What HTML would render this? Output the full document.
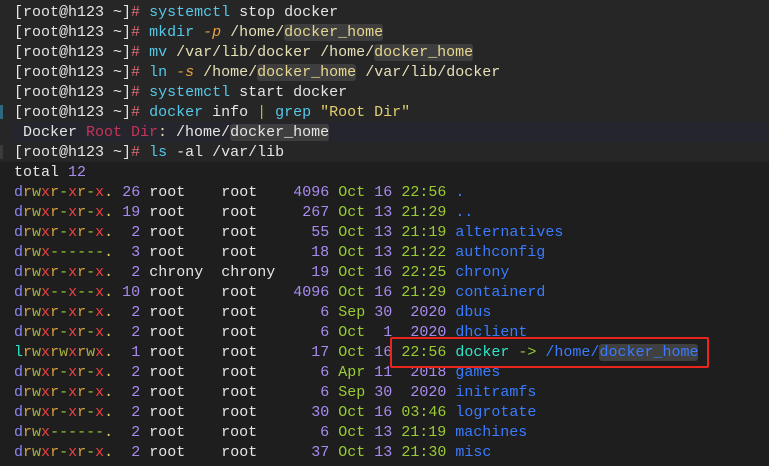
<!DOCTYPE html>
<html><head><style>
body{margin:0;width:769px;height:466px;overflow:hidden;background:#1e1e1e;font-family:"Liberation Mono",monospace;font-size:15px;}
.t{background:#262626;position:absolute;left:0;top:0;width:769px;height:162px;}
.hl{position:absolute;left:12px;top:122px;width:757px;height:20px;background:#25262d;}
pre{margin:0;position:absolute;left:14px;top:3px;line-height:20px;color:#e6e6e6;font-family:inherit;font-size:15px;}
.p{color:#e06c75}.c{color:#56c8e8}.o{color:#e8a040}.y{color:#e6e0b8}
.h{background:#3e3e3e;border-radius:3px;color:#e8d890}
.g{color:#9acd32}.s{color:#e0d070}.r{color:#c8325a}
.n{color:#a98bf0}.dt{color:#9acd32}.f{color:#3a7bff}.k{color:#2ee6c8}
.d{color:#8a85f0}.rr{color:#d8a040}.w{color:#a8b040}.x{color:#ee4040}.m{color:#9acd32}.dot{color:#e0d060}
.box{position:absolute;left:390px;top:337px;width:315px;height:27px;border:2px solid #e8261e;border-radius:2px;}
.bh{background:#404040;color:#3a7bff;border-radius:3px}
.bar{position:absolute;left:0;width:3px;height:14px;background:#3a3a3a}
</style></head><body>
<div class="t"></div><div class="hl"></div>
<div class="bar" style="top:105px;background:#2a6a7a"></div>
<div class="bar" style="top:145px"></div>
<pre>[root@h123 ~]<span class="p">#</span> <span class="c">systemctl</span> stop docker
[root@h123 ~]<span class="p">#</span> <span class="c">mkdir</span> <span class="o"><i>-p</i></span> <span class="y">/home/</span><span class="h">docker_home</span>
[root@h123 ~]<span class="p">#</span> <span class="c">mv</span> <span class="y">/var/lib/docker /home/</span><span class="h">docker_home</span>
[root@h123 ~]<span class="p">#</span> <span class="c">ln</span> <span class="o"><i>-s</i></span> <span class="y">/home/</span><span class="h">docker_home</span> <span class="y">/var/lib/docker</span>
[root@h123 ~]<span class="p">#</span> <span class="c">systemctl</span> start docker
[root@h123 ~]<span class="p">#</span> <span class="c">docker</span> info <span class="g">|</span> <span class="c">grep</span> <span class="s">"Root Dir"</span>
 Docker <span class="r">Root Dir</span><span class="y">:</span> /home/<span class="h" style="color:#e6e6e6">docker_home</span>
[root@h123 ~]<span class="p">#</span> <span class="c">ls</span> -al /var/lib
total <span class="n">12</span>
<span class="d">d</span><span class="rr">r</span><span class="w">w</span><span class="x">x</span><span class="rr">r</span><span class="m">-</span><span class="x">x</span><span class="rr">r</span><span class="m">-</span><span class="x">x</span><span class="dot">.</span> <span class="n">26</span> root    root    <span class="n">4096</span> <span class="dt">Oct</span> <span class="n">16</span> <span class="dt">22:56</span> <span class="f">.</span>
<span class="d">d</span><span class="rr">r</span><span class="w">w</span><span class="x">x</span><span class="rr">r</span><span class="m">-</span><span class="x">x</span><span class="rr">r</span><span class="m">-</span><span class="x">x</span><span class="dot">.</span> <span class="n">19</span> root    root     <span class="n">267</span> <span class="dt">Oct</span> <span class="n">13</span> <span class="dt">21:29</span> <span class="f">..</span>
<span class="d">d</span><span class="rr">r</span><span class="w">w</span><span class="x">x</span><span class="rr">r</span><span class="m">-</span><span class="x">x</span><span class="rr">r</span><span class="m">-</span><span class="x">x</span><span class="dot">.</span>  <span class="n">2</span> root    root      <span class="n">55</span> <span class="dt">Oct</span> <span class="n">13</span> <span class="dt">21:19</span> <span class="f">alternatives</span>
<span class="d">d</span><span class="rr">r</span><span class="w">w</span><span class="x">x</span><span class="m">------</span><span class="dot">.</span>  <span class="n">3</span> root    root      <span class="n">18</span> <span class="dt">Oct</span> <span class="n">13</span> <span class="dt">21:22</span> <span class="f">authconfig</span>
<span class="d">d</span><span class="rr">r</span><span class="w">w</span><span class="x">x</span><span class="rr">r</span><span class="m">-</span><span class="x">x</span><span class="rr">r</span><span class="m">-</span><span class="x">x</span><span class="dot">.</span>  <span class="n">2</span> chrony  chrony    <span class="n">19</span> <span class="dt">Oct</span> <span class="n">16</span> <span class="dt">22:25</span> <span class="f">chrony</span>
<span class="d">d</span><span class="rr">r</span><span class="w">w</span><span class="x">x</span><span class="m">--</span><span class="x">x</span><span class="m">--</span><span class="x">x</span><span class="dot">.</span> <span class="n">10</span> root    root    <span class="n">4096</span> <span class="dt">Oct</span> <span class="n">16</span> <span class="dt">21:29</span> <span class="f">containerd</span>
<span class="d">d</span><span class="rr">r</span><span class="w">w</span><span class="x">x</span><span class="rr">r</span><span class="m">-</span><span class="x">x</span><span class="rr">r</span><span class="m">-</span><span class="x">x</span><span class="dot">.</span>  <span class="n">2</span> root    root       <span class="n">6</span> <span class="dt">Sep</span> <span class="n">30</span>  <span class="n">2020</span> <span class="f">dbus</span>
<span class="d">d</span><span class="rr">r</span><span class="w">w</span><span class="x">x</span><span class="rr">r</span><span class="m">-</span><span class="x">x</span><span class="rr">r</span><span class="m">-</span><span class="x">x</span><span class="dot">.</span>  <span class="n">2</span> root    root       <span class="n">6</span> <span class="dt">Oct</span>  <span class="n">1</span>  <span class="n">2020</span> <span class="f">dhclient</span>
<span class="k">l</span><span class="rr">r</span><span class="w">w</span><span class="x">x</span><span class="rr">r</span><span class="w">w</span><span class="x">x</span><span class="rr">r</span><span class="w">w</span><span class="x">x</span><span class="dot">.</span>  <span class="n">1</span> root    root      <span class="n">17</span> <span class="dt">Oct</span> <span class="n">16</span> <span class="dt">22:56</span> <span class="k">docker</span> <span class="dt">-&gt;</span> <span class="f">/home/</span><span class="bh">docker_home</span>
<span class="d">d</span><span class="rr">r</span><span class="w">w</span><span class="x">x</span><span class="rr">r</span><span class="m">-</span><span class="x">x</span><span class="rr">r</span><span class="m">-</span><span class="x">x</span><span class="dot">.</span>  <span class="n">2</span> root    root       <span class="n">6</span> <span class="dt">Apr</span> <span class="n">11</span>  <span class="n">2018</span> <span class="f">games</span>
<span class="d">d</span><span class="rr">r</span><span class="w">w</span><span class="x">x</span><span class="rr">r</span><span class="m">-</span><span class="x">x</span><span class="rr">r</span><span class="m">-</span><span class="x">x</span><span class="dot">.</span>  <span class="n">2</span> root    root       <span class="n">6</span> <span class="dt">Sep</span> <span class="n">30</span>  <span class="n">2020</span> <span class="f">initramfs</span>
<span class="d">d</span><span class="rr">r</span><span class="w">w</span><span class="x">x</span><span class="rr">r</span><span class="m">-</span><span class="x">x</span><span class="rr">r</span><span class="m">-</span><span class="x">x</span><span class="dot">.</span>  <span class="n">2</span> root    root      <span class="n">30</span> <span class="dt">Oct</span> <span class="n">16</span> <span class="dt">03:46</span> <span class="f">logrotate</span>
<span class="d">d</span><span class="rr">r</span><span class="w">w</span><span class="x">x</span><span class="m">------</span><span class="dot">.</span>  <span class="n">2</span> root    root       <span class="n">6</span> <span class="dt">Oct</span> <span class="n">13</span> <span class="dt">21:19</span> <span class="f">machines</span>
<span class="d">d</span><span class="rr">r</span><span class="w">w</span><span class="x">x</span><span class="rr">r</span><span class="m">-</span><span class="x">x</span><span class="rr">r</span><span class="m">-</span><span class="x">x</span><span class="dot">.</span>  <span class="n">2</span> root    root      <span class="n">37</span> <span class="dt">Oct</span> <span class="n">13</span> <span class="dt">21:30</span> <span class="f">misc</span></pre>
<div class="box"></div>
</body></html>
